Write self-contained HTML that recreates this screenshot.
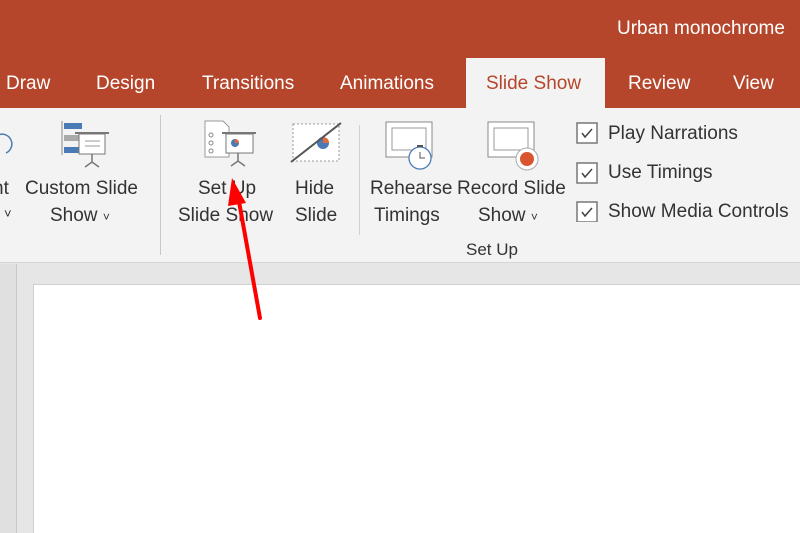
<!DOCTYPE html>
<html style="overflow:hidden;height:533px"><head><meta charset="utf-8"><style>
*{margin:0;padding:0;box-sizing:border-box}
body{width:800px;height:533px;overflow:hidden;background:#e6e6e6;font-family:"Liberation Sans",sans-serif;position:relative}
.a{position:absolute;white-space:nowrap}
.t{color:#fff;font-size:19px;top:73px}
.l{color:#333;font-size:19px;text-align:center}
</style></head><body>
<div class="a" style="left:0;top:0;width:800px;height:108px;background:#b5462b"></div>
<div class="a t" style="left:617px;top:18px">Urban monochrome</div>
<div class="a t" style="left:6px">Draw</div>
<div class="a t" style="left:96px">Design</div>
<div class="a t" style="left:202px">Transitions</div>
<div class="a t" style="left:340px">Animations</div>
<div class="a" style="left:466px;top:58px;width:139px;height:52px;background:#f3f3f3"></div>
<div class="a t" style="left:486px;color:#b5462b">Slide Show</div>
<div class="a t" style="left:628px">Review</div>
<div class="a t" style="left:733px">View</div>
<div class="a" style="left:0;top:108px;width:800px;height:155px;background:#f3f3f3;border-bottom:1px solid #d6d6d6"></div>
<div class="a" style="left:160px;top:115px;width:1px;height:140px;background:#c8c8c8"></div>
<div class="a" style="left:359px;top:125px;width:1px;height:110px;background:#d0d0d0"></div>
<svg class="a" style="left:0;top:115px" width="800" height="60">
<path d="M-2 20 a8 8 0 0 1 8 18" stroke="#4a7bb5" fill="none" stroke-width="1.5"/>
<rect x="64" y="8" width="18" height="6" fill="#4a7bb5"/><rect x="64" y="20" width="18" height="6" fill="#aaa"/><rect x="64" y="32" width="18" height="6" fill="#4a7bb5"/>
<line x1="62" y1="6" x2="62" y2="40" stroke="#888"/>
<rect x="79" y="19" width="26" height="20" fill="#fff" stroke="#777"/><line x1="75" y1="18" x2="109" y2="18" stroke="#777" stroke-width="2"/>
<line x1="85" y1="26" x2="100" y2="26" stroke="#999"/><line x1="85" y1="31" x2="100" y2="31" stroke="#999"/>
<path d="M92 39v8 M85 52l7-5 7 5" stroke="#777" fill="none" stroke-width="1.5"/>
<path d="M205 6h18l6 6v30h-24z" fill="#fff" stroke="#999"/>
<circle cx="211" cy="20" r="2" fill="none" stroke="#888"/><circle cx="211" cy="28" r="2" fill="none" stroke="#888"/><circle cx="211" cy="36" r="2" fill="none" stroke="#888"/>
<rect x="226" y="19" width="27" height="19" fill="#fff" stroke="#777"/><line x1="222" y1="18" x2="256" y2="18" stroke="#777" stroke-width="2"/>
<circle cx="235" cy="28" r="4" fill="#4a7bb5"/><path d="M235 28v-4a4 4 0 0 1 4 4z" fill="#e06a3a"/>
<path d="M238 38v8 M231 51l7-5 7 5" stroke="#777" fill="none" stroke-width="1.5"/>
<rect x="293" y="9" width="46" height="37" fill="#fff" stroke="#999" stroke-dasharray="2 2"/>
<circle cx="323" cy="28" r="6" fill="#4a7bb5"/><path d="M323 28v-6a6 6 0 0 1 6 6z" fill="#e06a3a"/>
<line x1="291" y1="47" x2="341" y2="8" stroke="#555" stroke-width="2"/>
<rect x="386" y="7" width="46" height="35" fill="#fff" stroke="#888"/><rect x="392" y="13" width="34" height="22" fill="none" stroke="#999"/>
<circle cx="420" cy="43" r="11" fill="#fff" stroke="#4a7bb5" stroke-width="1.3"/><path d="M420 37v6h5" stroke="#555" fill="none"/><line x1="417" y1="31" x2="423" y2="31" stroke="#555" stroke-width="2"/>
<rect x="488" y="7" width="46" height="35" fill="#fff" stroke="#888"/><rect x="494" y="13" width="34" height="22" fill="none" stroke="#999"/>
<circle cx="527" cy="44" r="11" fill="#fff" stroke="#aaa"/><circle cx="527" cy="44" r="7" fill="#d9552f"/>
</svg>
<svg class="a" style="left:576px;top:122px" width="24" height="100" fill="none" stroke="#777" stroke-width="1.5">
<rect x="1" y="1" width="20" height="20" fill="#fff"/><path d="M6 11l3 4 7-8" stroke="#444"/>
<rect x="1" y="41" width="20" height="20" fill="#fff"/><path d="M6 51l3 4 7-8" stroke="#444"/>
<rect x="1" y="80" width="20" height="20" fill="#fff"/><path d="M6 90l3 4 7-8" stroke="#444"/>
</svg>
<div class="a l" style="left:-7px;top:178px">nt</div>
<div class="a l" style="left:4px;top:206px;font-size:13px">˅</div>
<div class="a l" style="left:25px;top:178px">Custom Slide</div>
<div class="a l" style="left:50px;top:205px">Show <span style="font-size:12px">˅</span></div>
<div class="a l" style="left:198px;top:178px">Set Up</div>
<div class="a l" style="left:178px;top:205px">Slide Show</div>
<div class="a l" style="left:295px;top:178px">Hide</div>
<div class="a l" style="left:295px;top:205px">Slide</div>
<div class="a l" style="left:370px;top:178px">Rehearse</div>
<div class="a l" style="left:374px;top:205px">Timings</div>
<div class="a l" style="left:457px;top:178px">Record Slide</div>
<div class="a l" style="left:478px;top:205px">Show <span style="font-size:12px">˅</span></div>
<div class="a l" style="left:608px;top:123px">Play Narrations</div>
<div class="a l" style="left:608px;top:162px">Use Timings</div>
<div class="a l" style="left:608px;top:201px">Show Media Controls</div>
<div class="a l" style="left:466px;top:240px;font-size:17px">Set Up</div>
<div class="a" style="left:0;top:264px;width:17px;height:269px;background:#e0e0e0;border-right:1px solid #c8c8c8"></div>
<div class="a" style="left:33px;top:284px;width:767px;height:249px;background:#fff;border-left:1px solid #cfcfcf;border-top:1px solid #cfcfcf"></div>
<svg class="a" style="left:0;top:0" width="800" height="533">
<line x1="260" y1="318" x2="238" y2="196" stroke="#f00" stroke-width="4" stroke-linecap="round"/>
<path d="M232 178 L228 206 L246 203 Z" fill="#f00"/>
</svg>
</body></html>
